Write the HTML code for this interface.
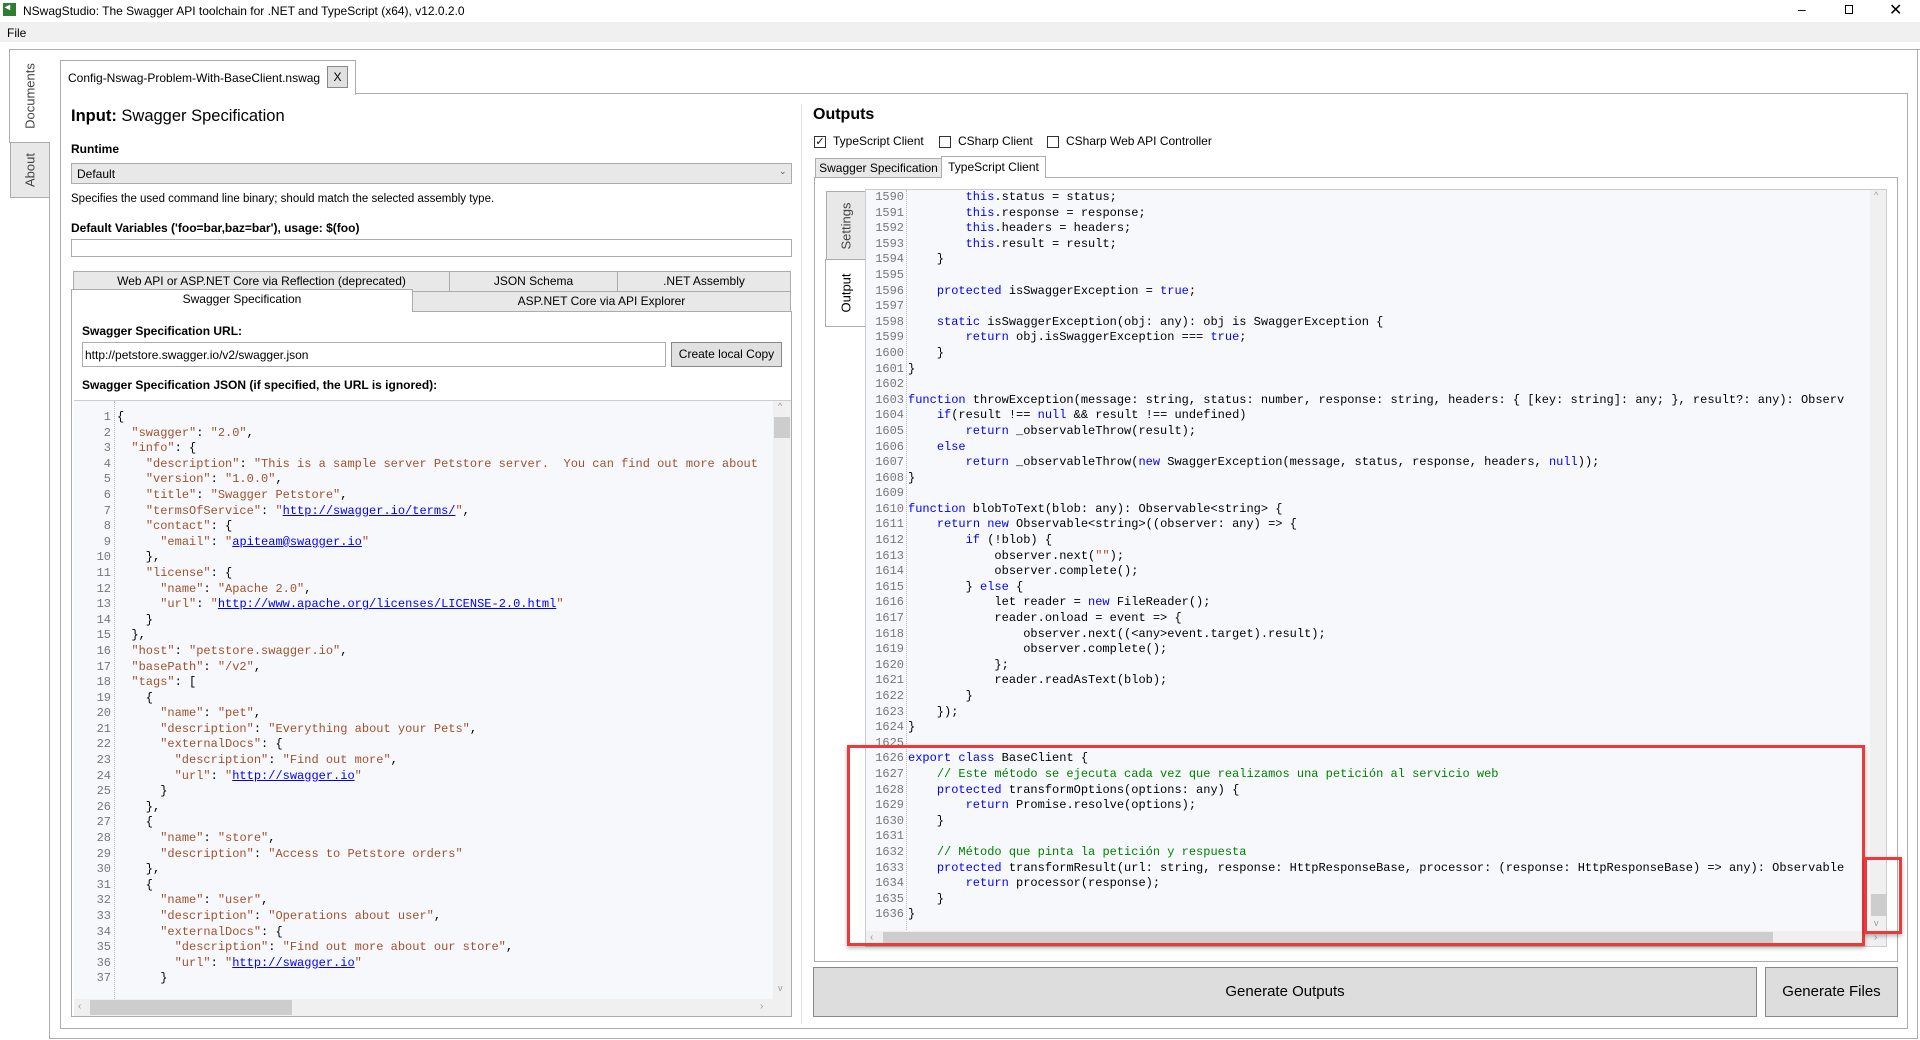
<!DOCTYPE html>
<html><head><meta charset="utf-8"><style>
*{box-sizing:border-box;margin:0;padding:0}
body{width:1920px;height:1040px;overflow:hidden;background:#fff;font-family:"Liberation Sans",sans-serif;font-size:12px;color:#000;position:relative}
.a{position:absolute}
.t{position:absolute;white-space:nowrap}
.b{font-weight:bold}
.tab{position:absolute;background:#e8e8e8;border:1px solid #acacac;text-align:center;font-size:12px;line-height:19px;white-space:nowrap}
.sel{background:#fff;border-bottom:none}
pre{font-family:"Liberation Mono",monospace;font-size:12px;line-height:15.6px;white-space:pre}
.ln{position:absolute;text-align:right;color:#777}
.k{color:#0000ff}.c{color:#008000}.s{color:#a0522d}.u{color:#0000ff;text-decoration:underline}
.sb{position:absolute;background:#f0f0f0}
.th{position:absolute;background:#cdcdcd}
.vt{position:absolute;border:1px solid #acacac;background:#e8e8e8}
.vt span{position:absolute;left:50%;top:50%;transform:translate(-50%,-50%) rotate(-90deg);white-space:nowrap;font-size:13px;color:#444}
</style></head><body>
<div class="a" style="left:3px;top:3px;width:13px;height:13px;background:#2e7d32"></div>
<div class="t" style="left:5px;top:2px;color:#fff;font-size:10px;font-weight:bold">◂</div>
<div class="t" style="left:23px;top:4px;font-size:12px">NSwagStudio: The Swagger API toolchain for .NET and TypeScript (x64), v12.0.2.0</div>
<div class="t" style="left:1798px;top:1px;font-size:14px">–</div>
<div class="a" style="left:1845px;top:5px;width:8px;height:9px;border:1px solid #000"></div>
<div class="t" style="left:1889px;top:0px;font-size:16px">✕</div>
<div class="a" style="left:0;top:22px;width:1920px;height:20px;background:#f0f0f0"></div>
<div class="t" style="left:7px;top:26px">File</div>
<div class="a" style="left:9px;top:49px;width:1911px;height:991px;border-top:1px solid #acacac"></div>
<div class="a" style="left:49px;top:49px;width:1869px;height:990px;border:1px solid #acacac;border-top:none"></div>
<div class="vt" style="left:9px;top:49px;width:41px;height:94px;background:#fff;border-right:none"><span>Documents</span></div>
<div class="vt" style="left:10px;top:142px;width:40px;height:56px"><span>About</span></div>
<div class="a" style="left:60px;top:93px;width:1848px;height:936px;border:1px solid #acacac"></div>
<div class="a" style="left:60px;top:60px;width:296px;height:35px;border:1px solid #acacac;border-bottom:none;background:#fff"></div>
<div class="t" style="left:68px;top:71px">Config-Nswag-Problem-With-BaseClient.nswag</div>
<div class="a" style="left:327px;top:66px;width:21px;height:22px;border:1px solid #888;background:#e0e0e0;text-align:center;line-height:20px;font-size:12px">X</div>
<div class="t" style="left:71px;top:107px;font-size:16.5px"><b>Input:</b> Swagger Specification</div>
<div class="t b" style="left:71px;top:142px">Runtime</div>
<div class="a" style="left:71px;top:163px;width:721px;height:21px;border:1px solid #acacac;background:#e8e8e8"></div>
<div class="t" style="left:77px;top:167px">Default</div>
<div class="t" style="left:779px;top:166px;font-size:9px;color:#555">⌄</div>
<div class="t" style="left:71px;top:193px;font-size:11.5px">Specifies the used command line binary; should match the selected assembly type.</div>
<div class="t b" style="left:71px;top:221px">Default Variables ('foo=bar,baz=bar'), usage: $(foo)</div>
<div class="a" style="left:71px;top:239px;width:721px;height:18px;border:1px solid #acacac"></div>
<div class="tab" style="left:73px;top:271px;width:377px;height:21px">Web API or ASP.NET Core via Reflection (deprecated)</div>
<div class="tab" style="left:449px;top:271px;width:169px;height:21px">JSON Schema</div>
<div class="tab" style="left:617px;top:271px;width:174px;height:21px">.NET Assembly</div>
<div class="a" style="left:71px;top:311px;width:721px;height:706px;border:1px solid #acacac"></div>
<div class="tab" style="left:412px;top:291px;width:379px;height:21px">ASP.NET Core via API Explorer</div>
<div class="tab sel" style="left:71px;top:289px;width:342px;height:23px;line-height:19px">Swagger Specification</div>
<div class="t b" style="left:82px;top:324px">Swagger Specification URL:</div>
<div class="a" style="left:82px;top:342px;width:584px;height:25px;border:1px solid #acacac"></div>
<div class="t" style="left:85px;top:348px">http://petstore.swagger.io/v2/swagger.json</div>
<div class="a" style="left:671px;top:342px;width:111px;height:25px;border:1px solid #888;background:#e1e1e1;text-align:center;line-height:23px">Create local Copy</div>
<div class="t b" style="left:82px;top:378px">Swagger Specification JSON (if specified, the URL is ignored):</div>
<div class="a" style="left:74px;top:400px;width:717px;height:616px;background:#f7f8fc;overflow:hidden;border-top:1px solid #ccc">
<pre class="ln" style="left:0;top:9px;width:37px">1
2
3
4
5
6
7
8
9
10
11
12
13
14
15
16
17
18
19
20
21
22
23
24
25
26
27
28
29
30
31
32
33
34
35
36
37</pre>
<div class="a" style="left:40px;top:0;height:616px;border-left:1px dotted #bbb"></div>
<pre class="a" style="left:43px;top:9px">{
  <span class="s">"swagger"</span>: <span class="s">"2.0"</span>,
  <span class="s">"info"</span>: {
    <span class="s">"description"</span>: <span class="s">"This is a sample server Petstore server.  You can find out more about</span>
    <span class="s">"version"</span>: <span class="s">"1.0.0"</span>,
    <span class="s">"title"</span>: <span class="s">"Swagger Petstore"</span>,
    <span class="s">"termsOfService"</span>: <span class="s">"</span><span class="u">http://swagger.io/terms/</span><span class="s">"</span>,
    <span class="s">"contact"</span>: {
      <span class="s">"email"</span>: <span class="s">"</span><span class="u">apiteam@swagger.io</span><span class="s">"</span>
    },
    <span class="s">"license"</span>: {
      <span class="s">"name"</span>: <span class="s">"Apache 2.0"</span>,
      <span class="s">"url"</span>: <span class="s">"</span><span class="u">http://www.apache.org/licenses/LICENSE-2.0.html</span><span class="s">"</span>
    }
  },
  <span class="s">"host"</span>: <span class="s">"petstore.swagger.io"</span>,
  <span class="s">"basePath"</span>: <span class="s">"/v2"</span>,
  <span class="s">"tags"</span>: [
    {
      <span class="s">"name"</span>: <span class="s">"pet"</span>,
      <span class="s">"description"</span>: <span class="s">"Everything about your Pets"</span>,
      <span class="s">"externalDocs"</span>: {
        <span class="s">"description"</span>: <span class="s">"Find out more"</span>,
        <span class="s">"url"</span>: <span class="s">"</span><span class="u">http://swagger.io</span><span class="s">"</span>
      }
    },
    {
      <span class="s">"name"</span>: <span class="s">"store"</span>,
      <span class="s">"description"</span>: <span class="s">"Access to Petstore orders"</span>
    },
    {
      <span class="s">"name"</span>: <span class="s">"user"</span>,
      <span class="s">"description"</span>: <span class="s">"Operations about user"</span>,
      <span class="s">"externalDocs"</span>: {
        <span class="s">"description"</span>: <span class="s">"Find out more about our store"</span>,
        <span class="s">"url"</span>: <span class="s">"</span><span class="u">http://swagger.io</span><span class="s">"</span>
      }</pre>
<div class="sb" style="left:699px;top:0;width:18px;height:598px"></div>
<div class="th" style="left:700px;top:16px;width:16px;height:21px"></div>
<div class="t" style="left:704px;top:0;font-size:9px;color:#999">^</div>
<div class="t" style="left:704px;top:582px;font-size:9px;color:#999">v</div>
<div class="sb" style="left:0;top:598px;width:717px;height:18px"></div>
<div class="th" style="left:16px;top:599px;width:202px;height:15px"></div>
<div class="t" style="left:4px;top:600px;font-size:10px;color:#999">‹</div>
<div class="t" style="left:686px;top:600px;font-size:10px;color:#999">›</div>
</div>
<div class="a" style="left:801px;top:104px;width:1px;height:920px;background:#e0e0e0"></div>
<div class="t b" style="left:813px;top:106px;font-size:16px">Outputs</div>
<div class="a" style="left:814px;top:136px;width:12px;height:12px;border:1px solid #333;font-size:11px;line-height:10px;text-align:center">✓</div>
<div class="t" style="left:833px;top:134px">TypeScript Client</div>
<div class="a" style="left:939px;top:136px;width:12px;height:12px;border:1px solid #333"></div>
<div class="t" style="left:958px;top:134px">CSharp Client</div>
<div class="a" style="left:1047px;top:136px;width:12px;height:12px;border:1px solid #333"></div>
<div class="t" style="left:1066px;top:134px">CSharp Web API Controller</div>
<div class="a" style="left:814px;top:177px;width:1084px;height:785px;border:1px solid #acacac"></div>
<div class="tab" style="left:815px;top:158px;width:127px;height:20px;line-height:18px">Swagger Specification</div>
<div class="tab sel" style="left:941px;top:156px;width:105px;height:22px;line-height:20px">TypeScript Client</div>
<div class="vt" style="left:826px;top:191px;width:40px;height:69px"><span>Settings</span></div>
<div class="vt" style="left:825px;top:259px;width:41px;height:68px;background:#fff;border-right:none"><span style="color:#000">Output</span></div>
<div class="a" style="left:865px;top:189px;width:1022px;height:758px;background:#f7f8fc;overflow:hidden;border:1px solid #ccc">
<pre class="ln" style="left:0;top:0;width:38px">1590
1591
1592
1593
1594
1595
1596
1597
1598
1599
1600
1601
1602
1603
1604
1605
1606
1607
1608
1609
1610
1611
1612
1613
1614
1615
1616
1617
1618
1619
1620
1621
1622
1623
1624
1625
1626
1627
1628
1629
1630
1631
1632
1633
1634
1635
1636</pre>
<div class="a" style="left:40px;top:0;height:758px;border-left:1px dotted #bbb"></div>
<pre class="a" style="left:42px;top:0">        <span class="k">this</span>.status = status;
        <span class="k">this</span>.response = response;
        <span class="k">this</span>.headers = headers;
        <span class="k">this</span>.result = result;
    }

    <span class="k">protected</span> isSwaggerException = <span class="k">true</span>;

    <span class="k">static</span> isSwaggerException(obj: any): obj is SwaggerException {
        <span class="k">return</span> obj.isSwaggerException === <span class="k">true</span>;
    }
}

<span class="k">function</span> throwException(message: string, status: number, response: string, headers: { [key: string]: any; }, result?: any): Observ
    <span class="k">if</span>(result !== <span class="k">null</span> &amp;&amp; result !== undefined)
        <span class="k">return</span> _observableThrow(result);
    <span class="k">else</span>
        <span class="k">return</span> _observableThrow(<span class="k">new</span> SwaggerException(message, status, response, headers, <span class="k">null</span>));
}

<span class="k">function</span> blobToText(blob: any): Observable&lt;string&gt; {
    <span class="k">return</span> <span class="k">new</span> Observable&lt;string&gt;((observer: any) =&gt; {
        <span class="k">if</span> (!blob) {
            observer.next(<span class="s">""</span>);
            observer.complete();
        } <span class="k">else</span> {
            let reader = <span class="k">new</span> FileReader();
            reader.onload = event =&gt; {
                observer.next((&lt;any&gt;event.target).result);
                observer.complete();
            };
            reader.readAsText(blob);
        }
    });
}

<span class="k">export</span> <span class="k">class</span> BaseClient {
    <span class="c">// Este método se ejecuta cada vez que realizamos una petición al servicio web</span>
    <span class="k">protected</span> transformOptions(options: any) {
        <span class="k">return</span> Promise.resolve(options);
    }

    <span class="c">// Método que pinta la petición y respuesta</span>
    <span class="k">protected</span> transformResult(url: string, response: HttpResponseBase, processor: (response: HttpResponseBase) =&gt; any): Observable
        <span class="k">return</span> processor(response);
    }
}</pre>
<div class="sb" style="left:1004px;top:0;width:17px;height:742px"></div>
<div class="th" style="left:1005px;top:704px;width:15px;height:22px"></div>
<div class="t" style="left:1008px;top:0;font-size:9px;color:#999">^</div>
<div class="t" style="left:1008px;top:728px;font-size:9px;color:#999">v</div>
<div class="sb" style="left:0;top:741px;width:1022px;height:17px"></div>
<div class="th" style="left:17px;top:742px;width:890px;height:14px"></div>
<div class="t" style="left:4px;top:742px;font-size:10px;color:#999">‹</div>
<div class="t" style="left:1008px;top:742px;font-size:10px;color:#999">›</div>
</div>
<div class="a" style="left:847px;top:745px;width:1018px;height:201px;border:3px solid #e83c3c;box-shadow:0 2px 4px rgba(0,0,0,.3)"></div>
<div class="a" style="left:1864px;top:857px;width:38px;height:77px;border:3px solid #e83c3c;box-shadow:0 2px 4px rgba(0,0,0,.3)"></div>
<div class="a" style="left:813px;top:967px;width:944px;height:50px;border:1px solid #888;background:#dddddd;text-align:center;line-height:48px;font-size:15px">Generate Outputs</div>
<div class="a" style="left:1765px;top:967px;width:133px;height:50px;border:1px solid #888;background:#dddddd;text-align:center;line-height:48px;font-size:15px">Generate Files</div>
</body></html>
